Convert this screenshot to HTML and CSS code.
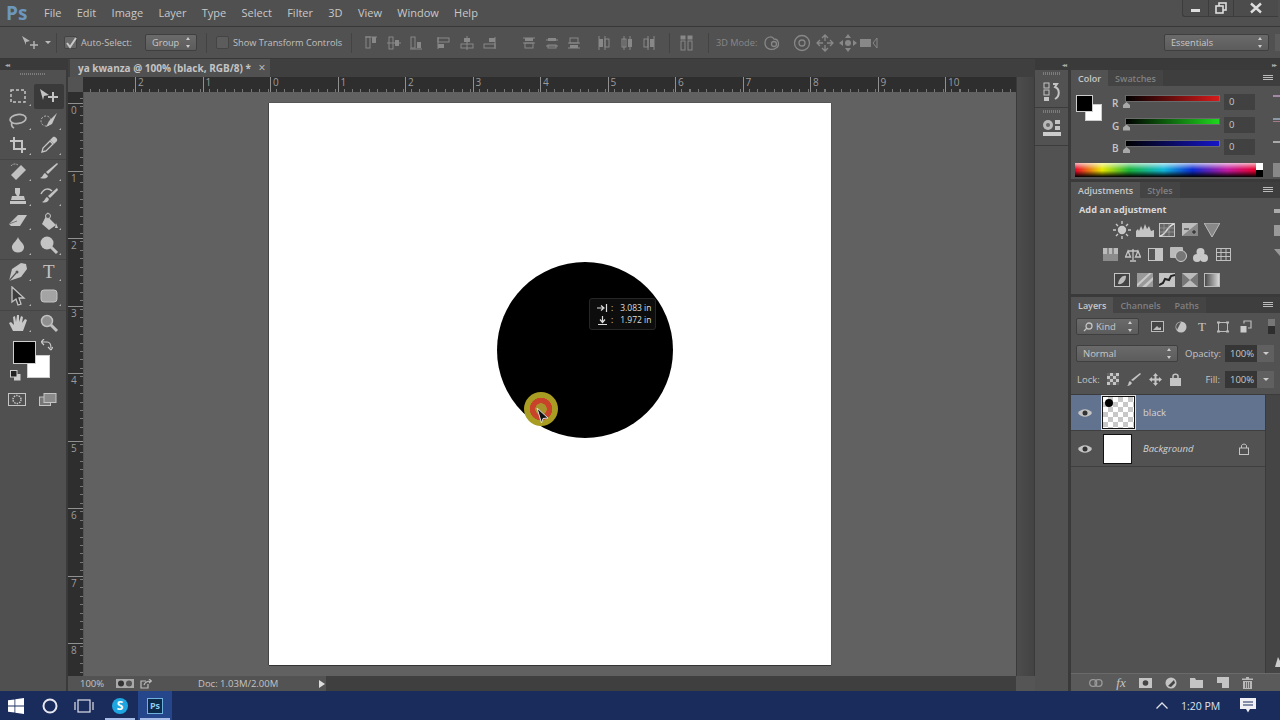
FILE: index.html
```html
<!DOCTYPE html>
<html lang="en">
<head>
  <meta charset="UTF-8" />
  <title>ya kwanza @ 100% (black, RGB/8) *</title>
  <link rel="stylesheet" href="styles.css">
</head>
<body>
<div class="app">

  <!-- Menu bar -->
  <div class="menubar">
    <div class="ps-logo">Ps</div>
    <nav class="menu">
      <span>File</span><span>Edit</span><span>Image</span><span>Layer</span><span>Type</span><span>Select</span><span>Filter</span><span>3D</span><span>View</span><span>Window</span><span>Help</span>
    </nav>
    <div class="win-buttons">
      <div class="win-btn min"><svg width="10" height="10" viewBox="0 0 10 10"><rect x="0" y="6" width="9" height="3" fill="#ddd"/></svg></div>
      <div class="win-btn max"><svg width="12" height="12" viewBox="0 0 12 12" fill="none" stroke="#ddd" stroke-width="1.6"><rect x="4" y="1" width="7" height="7"/><rect x="1" y="4" width="7" height="7" fill="#4f4f4f"/></svg></div>
      <div class="win-btn close"><svg width="12" height="12" viewBox="0 0 12 12" stroke="#ddd" stroke-width="2.4"><path d="M1 1.5 L11 10.5 M11 1.5 L1 10.5"/></svg></div>
    </div>
  </div>

  <!-- Options bar -->
  <div class="options">
    <svg class="opt-move" width="18" height="14" viewBox="0 0 18 14" fill="#b5b5b5"><path d="M0 0 L8 5 L4 6 L4 9 Z"/><path d="M12 5 V13 M8 9 H16" stroke="#b5b5b5" stroke-width="1.4"/></svg>
    <span class="caret"></span>
    <span class="opt-sep sep-a"></span>
    <span class="checkbox"><svg width="12" height="12" viewBox="0 0 12 12" fill="none" stroke="#c8c8c8" stroke-width="2"><path d="M2 6 L5 10 L11 1"/></svg></span>
    <span class="opt-label auto">Auto-Select:</span>
    <span class="select group-select">Group<i class="updown"></i></span>
    <span class="opt-sep sep-b"></span>
    <span class="checkbox empty"></span>
    <span class="opt-label transform">Show Transform Controls</span>
    <span class="opt-sep sep-c"></span>
    <div class="align-icons">
      <div class="align-set set-1">
        <svg width="14" height="14" viewBox="0 0 14 14"><path d="M1 1H13" stroke="#888"/><rect x="2" y="1" width="4" height="11" fill="none" stroke="#888"/><rect x="8" y="1" width="4" height="6" fill="#888"/></svg>
        <svg width="14" height="14" viewBox="0 0 14 14"><path d="M0 7H14" stroke="#888"/><rect x="2" y="1" width="4" height="12" fill="none" stroke="#888"/><rect x="8" y="4" width="4" height="6" fill="#888"/></svg>
        <svg width="14" height="14" viewBox="0 0 14 14"><path d="M1 13H13" stroke="#888"/><rect x="2" y="1" width="4" height="11" fill="none" stroke="#888"/><rect x="8" y="6" width="4" height="6" fill="#888"/></svg>
      </div>
      <div class="align-set set-2">
        <svg width="14" height="14" viewBox="0 0 14 14"><path d="M1 1V13" stroke="#888"/><rect x="1" y="2" width="11" height="4" fill="none" stroke="#888"/><rect x="1" y="8" width="6" height="4" fill="#888"/></svg>
        <svg width="14" height="14" viewBox="0 0 14 14"><path d="M7 0V14" stroke="#888"/><rect x="1" y="8" width="12" height="4" fill="none" stroke="#888"/><rect x="4" y="2" width="6" height="4" fill="#888"/></svg>
        <svg width="14" height="14" viewBox="0 0 14 14"><path d="M13 1V13" stroke="#888"/><rect x="2" y="8" width="11" height="4" fill="none" stroke="#888"/><rect x="7" y="2" width="6" height="4" fill="#888"/></svg>
      </div>
      <div class="align-set set-3">
        <svg width="14" height="14" viewBox="0 0 14 14"><path d="M1 2H13M1 7H13" stroke="#888"/><rect x="3" y="2" width="8" height="3" fill="#888"/><rect x="3" y="7" width="8" height="5" fill="none" stroke="#888"/></svg>
        <svg width="14" height="14" viewBox="0 0 14 14"><path d="M1 4H13M1 10H13" stroke="#888"/><rect x="3" y="2" width="8" height="3" fill="#888"/><rect x="3" y="9" width="8" height="3" fill="none" stroke="#888"/></svg>
        <svg width="14" height="14" viewBox="0 0 14 14"><path d="M1 7H13M1 12H13" stroke="#888"/><rect x="3" y="2" width="8" height="5" fill="none" stroke="#888"/><rect x="3" y="9" width="8" height="3" fill="#888"/></svg>
      </div>
      <div class="align-set">
        <svg width="14" height="14" viewBox="0 0 14 14"><path d="M2 0V14M8 0V14" stroke="#888"/><rect x="2" y="3" width="4" height="8" fill="#888"/><rect x="8" y="3" width="4" height="8" fill="none" stroke="#888"/></svg>
        <svg width="14" height="14" viewBox="0 0 14 14"><path d="M4 0V14M10 0V14" stroke="#888"/><rect x="2" y="3" width="4" height="8" fill="none" stroke="#888"/><rect x="8" y="3" width="4" height="8" fill="#888"/></svg>
        <svg width="14" height="14" viewBox="0 0 14 14"><path d="M6 0V14M12 0V14" stroke="#888"/><rect x="2" y="3" width="4" height="8" fill="none" stroke="#888"/><rect x="8" y="3" width="4" height="8" fill="#888"/></svg>
      </div>
      <span class="opt-sep sep-d"></span>
      <svg width="16" height="16" viewBox="0 0 16 16" fill="none" stroke="#888"><rect x="2" y="6" width="4" height="9"/><rect x="9" y="6" width="4" height="9"/><rect x="2" y="1" width="4" height="3" fill="#888"/><rect x="9" y="1" width="4" height="3" fill="#888"/></svg>
      <span class="opt-sep sep-e"></span>
    </div>
    <span class="opt-label mode">3D Mode:</span>
    <div class="mode-icons">
      <svg width="20" height="18" viewBox="0 0 20 18" fill="none" stroke="#888" stroke-width="1.3"><path d="M3 9 C3 3 10 1 12 5 C17 5 18 12 14 14 C10 17 3 15 3 9Z"/><circle cx="12" cy="10" r="2.5"/></svg>
      <svg width="18" height="20" viewBox="0 0 18 20" fill="none" stroke="#888" stroke-width="1.3"><circle cx="9" cy="10" r="7.5"/><circle cx="9" cy="10" r="3"/></svg>
      <svg width="18" height="18" viewBox="0 0 18 18" fill="none" stroke="#888" stroke-width="1.3"><path d="M9 1V7M9 11V17M1 9H7M11 9H17M6 4L9 1L12 4M6 14L9 17L12 14M4 6L1 9L4 12M14 6L17 9L14 12"/></svg>
      <svg width="18" height="18" viewBox="0 0 18 18" fill="#888"><path d="M9 0L12 4H6ZM9 18L12 14H6ZM0 9L4 6V12ZM18 9L14 6V12Z"/><circle cx="9" cy="9" r="3"/></svg>
      <svg width="18" height="12" viewBox="0 0 18 12" fill="#888"><rect x="0" y="2" width="11" height="8"/><path d="M13 6L17 1V11Z" fill="none" stroke="#888"/></svg>
    </div>
    <span class="select essentials">Essentials<i class="updown"></i></span>
    <span class="select-stub"></span>
  </div>

  <div class="main">

    <!-- Tools -->
    <aside class="toolbar">
      <div class="collapse-bar"><span class="chevrons">◂◂</span></div>
      <div class="grip"></div>
      <div class="tool-group">
        <div class="tool more"><svg width="18" height="16" viewBox="0 0 18 16" fill="none" stroke="#c4c4c4" stroke-width="1.5" stroke-dasharray="3 2"><rect x="2" y="2" width="14" height="12"/></svg></div>
        <div class="tool active"><svg width="20" height="16" viewBox="0 0 20 16" fill="#c4c4c4"><path d="M1 1 L10 7 L5 8 L4 12 Z"/><path d="M14 4 V14 M9 9 H19" stroke="#c4c4c4" stroke-width="2"/></svg></div>
        <div class="tool more"><svg width="18" height="16" viewBox="0 0 18 16" fill="none" stroke="#b8b8b8" stroke-width="1.7"><ellipse cx="9" cy="6" rx="8" ry="4.5" transform="rotate(-8 9 6)"/><path d="M3 9 C2 12 3 14 5 15"/></svg></div>
        <div class="tool more"><svg width="18" height="18" viewBox="0 0 18 18"><circle cx="6" cy="9" r="5" fill="none" stroke="#b8b8b8" stroke-dasharray="2 1.5"/><path d="M17 1 L9 9 L6 15 L12 12 Z" fill="#c4c4c4"/></svg></div>
        <div class="tool more"><svg width="18" height="18" viewBox="0 0 18 18" fill="none" stroke="#c4c4c4" stroke-width="2"><path d="M5 1V13H17M1 5H13V17"/></svg></div>
        <div class="tool more"><svg width="18" height="18" viewBox="0 0 18 18"><path d="M2 16 L3 12 L10 5 L13 8 L6 15 Z" fill="none" stroke="#c4c4c4" stroke-width="1.3"/><path d="M10 4 L13 1 C15 0 18 3 17 5 L14 8 Z" fill="#c4c4c4"/></svg></div>
      </div>
      <div class="tool-group">
        <div class="tool more"><svg width="20" height="20" viewBox="0 0 20 20"><path d="M3 13 L13 3 L18 8 L8 18 Z" fill="#c0c0c0"/><path d="M3 4 C5 1 9 2 10 3" fill="none" stroke="#b0b0b0" stroke-dasharray="2 1"/></svg></div>
        <div class="tool more"><svg width="20" height="20" viewBox="0 0 20 20" fill="#c4c4c4"><path d="M18 1 L19 2 L9 12 L7 10 Z"/><path d="M6 11 L9 14 C8 17 4 17 1 16 C4 15 4 12 6 11Z"/></svg></div>
        <div class="tool more"><svg width="20" height="18" viewBox="0 0 20 18" fill="#c4c4c4"><path d="M7 1 H12 V6 L11 9 H16 L17 13 H3 L4 9 H9 L7 6 Z"/><rect x="2" y="14" width="16" height="3"/></svg></div>
        <div class="tool more"><svg width="20" height="18" viewBox="0 0 20 18" fill="#c4c4c4"><path d="M18 1 L9 9 L11 11 L19 3Z"/><path d="M8 10 L10 12 C9 16 5 16 3 15 C6 14 6 11 8 10Z"/><path d="M2 7 C5 1 10 1 13 4" fill="none" stroke="#c4c4c4" stroke-width="1.5"/></svg></div>
        <div class="tool more"><svg width="20" height="16" viewBox="0 0 20 16"><path d="M1 11 L10 2 H19 L12 13 H3 Z" fill="#c4c4c4"/><path d="M1 11 L9 8" stroke="#777"/></svg></div>
        <div class="tool more"><svg width="20" height="20" viewBox="0 0 20 20"><path d="M9 1 L11 8 L17 14 L10 19 L3 13 Z" fill="#c4c4c4"/><circle cx="9" cy="5" r="2.5" fill="#555" stroke="#c4c4c4"/><path d="M17 12 L19 17 L16 17Z" fill="#c4c4c4"/></svg></div>
        <div class="tool more"><svg width="16" height="18" viewBox="0 0 16 18" fill="#c4c4c4"><path d="M8 1 C9 5 15 8 14 12 C13 18 3 18 2 12 C1 8 7 5 8 1Z"/></svg></div>
        <div class="tool more"><svg width="20" height="20" viewBox="0 0 20 20"><circle cx="8" cy="8" r="6.5" fill="#c4c4c4"/><path d="M12 12 L18 18" stroke="#c4c4c4" stroke-width="3"/></svg></div>
      </div>
      <div class="tool-group">
        <div class="tool more"><svg width="20" height="20" viewBox="0 0 20 20"><path d="M18 2 L13 1 L4 7 L1 19 L13 15 L19 7 Z" fill="#c4c4c4"/><path d="M1 19 L8 11" stroke="#555" stroke-width="1.2"/><circle cx="9" cy="10" r="1.5" fill="#555"/></svg></div>
        <div class="tool more type">T</div>
        <div class="tool more"><svg width="16" height="20" viewBox="0 0 16 20" fill="#3d3d3d" stroke="#c4c4c4" stroke-width="1.3"><path d="M2 1 L14 12 L9 12 L11 18 L8 19 L6 13 L2 16 Z"/></svg></div>
        <div class="tool more"><svg width="18" height="14" viewBox="0 0 18 14"><rect x="1" y="1" width="16" height="12" rx="3" fill="#a4a4a4" stroke="#c4c4c4"/></svg></div>
      </div>
      <div class="tool-group last">
        <div class="tool more"><svg width="20" height="20" viewBox="0 0 20 20" fill="#c8c8c8"><path d="M5 18 L1 10 L3 9 L6 12 L5 4 L7 3 L8 9 L9 2 L11 2 L11 9 L13 3 L15 4 L14 10 L17 6 L19 7 L15 18 Z"/></svg></div>
        <div class="tool"><svg width="20" height="20" viewBox="0 0 20 20"><circle cx="8" cy="8" r="5.5" fill="#8f8f8f" stroke="#c0c0c0" stroke-width="1.5"/><path d="M12 12 L18 18" stroke="#c0c0c0" stroke-width="3"/></svg></div>
      </div>
      <div class="colors">
        <div class="chip chip-bg"></div>
        <div class="chip chip-fg"></div>
        <svg class="chip-swap" width="12" height="12" viewBox="0 0 12 12" fill="none" stroke="#ccc" stroke-width="1.2"><path d="M1 3H6C9 3 10 5 10 9M0 3L3 0M0 3L3 6M10 11L7 8M10 11L12 8"/></svg>
        <svg class="chip-reset" width="11" height="11" viewBox="0 0 11 11"><rect x="4" y="4" width="6.5" height="6.5" fill="#ccc"/><rect x="0.5" y="0.5" width="6.5" height="6.5" fill="#222" stroke="#ccc"/></svg>
      </div>
      <div class="mask-row">
        <svg width="18" height="13" viewBox="0 0 18 13"><rect x="0.5" y="0.5" width="17" height="12" fill="none" stroke="#c4c4c4"/><circle cx="9" cy="6.5" r="4" fill="none" stroke="#c4c4c4" stroke-width="1.5" stroke-dasharray="1.5 1"/></svg>
        <svg width="18" height="13" viewBox="0 0 18 13"><rect x="0.5" y="4" width="11" height="8.5" fill="#777" stroke="#c4c4c4"/><rect x="5" y="0.5" width="12" height="9" fill="#8a8a8a" stroke="#c4c4c4"/></svg>
      </div>
    </aside>

    <!-- Document -->
    <section class="document">
      <div class="tabs">
        <div class="doc-tab">ya kwanza @ 100% (black, RGB/8) * <span class="tab-x">×</span></div>
      </div>
      <div class="doc-body">
        <div class="doc-view">
          <div class="ruler-corner"></div>
          <div class="ruler ruler-h">
            <span class="start">&nbsp;</span><span>2</span><span>1</span><span>0</span><span>1</span><span>2</span><span>3</span><span>4</span><span>5</span><span>6</span><span>7</span><span>8</span><span>9</span><span>10</span>
          </div>
          <div class="ruler ruler-v">
            <span class="start"></span><span>0</span><span>1</span><span>2</span><span>3</span><span>4</span><span>5</span><span>6</span><span>7</span><span>8</span>
          </div>
          <div class="pasteboard">
            <div class="page">
              <div class="shape"></div>
              <div class="readout">
                <div class="readout-row"><svg width="11" height="8" viewBox="0 0 11 8" fill="none" stroke="#ddd" stroke-width="1.2"><path d="M0 4H6M4 1.500L7 4L4 6.500M9.500 0V8"/></svg><span>:</span><span>3.083 in</span></div>
                <div class="readout-row"><svg width="11" height="9" viewBox="0 0 11 9" fill="none" stroke="#ddd" stroke-width="1.2"><path d="M5.500 0V6M3 3.500L5.500 6.500L8 3.500M1 8.500H10"/></svg><span>:</span><span>1.972 in</span></div>
              </div>
              <div class="click-mark"></div>
              <svg class="cursor" width="14" height="17" viewBox="0 0 14 17"><path d="M1 1 L12 11 L7 11.5 L5.5 16 Z" fill="#111" stroke="#ddd"/></svg>
            </div>
          </div>
        </div>
        <div class="doc-scroll"></div>
      </div>
      <div class="statusbar">
        <div class="status-info">
          <span class="zoom-val">100%</span>
          <svg class="status-ico" width="18" height="9" viewBox="0 0 18 9"><rect width="18" height="9" fill="#aaa"/><circle cx="5" cy="4.5" r="3" fill="#333"/><circle cx="13" cy="4.5" r="3" fill="#555"/></svg>
          <svg width="12" height="10" viewBox="0 0 12 10" fill="none" stroke="#bbb" stroke-width="1.2"><path d="M8 5V9H1V2H6"/><path d="M4 6 C5 3 7 2 11 2M9 0L11.5 2L9 4"/></svg>
          <span class="doc-size">Doc: 1.03M/2.00M</span>
          <span class="play"></span>
        </div>
        <div class="status-track"></div>
        <div class="status-corner"></div>
      </div>
    </section>

    <!-- Collapsed panels -->
    <aside class="dock">
      <div class="collapse-bar right"><span class="chevrons">◂◂</span></div>
      <div class="dock-item">
        <div class="grip"></div>
        <svg width="20" height="20" viewBox="0 0 20 20"><g fill="none" stroke="#c4c4c4"><rect x="2" y="1" width="5" height="5"/><rect x="2" y="8" width="5" height="5"/></g><rect x="2" y="15" width="5" height="4" fill="#c4c4c4"/><path d="M11 2H15L13 5C18 7 18 14 13 17" fill="none" stroke="#c4c4c4" stroke-width="2"/></svg>
      </div>
      <div class="dock-item">
        <div class="grip"></div>
        <svg width="20" height="20" viewBox="0 0 20 20"><circle cx="6" cy="7" r="5" fill="#b8b8b8"/><circle cx="6" cy="7" r="2" fill="#666"/><rect x="13" y="2" width="5" height="4" fill="#c4c4c4"/><rect x="13" y="8" width="5" height="4" fill="#c4c4c4"/><rect x="1" y="14" width="18" height="4" fill="#ccc"/></svg>
      </div>
    </aside>

    <!-- Panels -->
    <aside class="panels">
      <div class="collapse-bar end"><span class="chevrons">▸▸</span></div>

      <div class="panel color-panel">
        <div class="panel-tabs">
          <span class="ptab on">Color</span><span class="ptab">Swatches</span>
          <span class="panel-menu"></span>
        </div>
        <div class="color-body">
          <div class="color-chips">
            <div class="chip-b"></div>
            <div class="chip-f"></div>
          </div>
          <div class="sliders">
            <div class="slider-row"><span class="slider-name">R</span><div class="track red"><i class="thumb"></i></div><span class="num">0</span></div>
            <div class="slider-row"><span class="slider-name">G</span><div class="track green"><i class="thumb"></i></div><span class="num">0</span></div>
            <div class="slider-row"><span class="slider-name">B</span><div class="track blue"><i class="thumb"></i></div><span class="num">0</span></div>
          </div>
        </div>
        <div class="spectrum-row">
          <div class="spectrum"></div>
          <div class="spectrum-ends"><i></i><i></i></div>
        </div>
      </div>

      <div class="panel adjust-panel">
        <div class="panel-tabs">
          <span class="ptab on">Adjustments</span><span class="ptab">Styles</span>
          <span class="panel-menu"></span>
        </div>
        <div class="adjust-title">Add an adjustment</div>
        <div class="adj-row">
          <svg width="18" height="18" viewBox="0 0 18 18" stroke="#c8c8c8" stroke-width="1.4"><circle cx="9" cy="9" r="3.5" fill="#c8c8c8"/><path d="M9 0V3M9 15V18M0 9H3M15 9H18M3 3L5 5M13 13L15 15M15 3L13 5M5 13L3 15"/></svg>
          <svg width="18" height="14" viewBox="0 0 18 14" fill="#c4c4c4"><path d="M0 14 V8 L2 6 L3 8 L5 3 L7 7 L9 1 L11 6 L13 3 L15 8 L18 7 V14Z"/></svg>
          <svg width="16" height="14" viewBox="0 0 16 14"><rect x="0.5" y="0.5" width="15" height="13" fill="#666" stroke="#c4c4c4"/><path d="M1 13 C7 12 8 3 15 1" fill="none" stroke="#ddd" stroke-width="1.5"/><path d="M5 1V13M10 1V13M1 5H15M1 9H15" stroke="#aaa" stroke-width="0.6"/></svg>
          <svg width="16" height="13" viewBox="0 0 16 13"><rect width="16" height="13" fill="#bdbdbd"/><path d="M0 13 L16 0 V13Z" fill="#888"/><path d="M2 6H7M10 9H14M12 7V11" stroke="#222"/></svg>
          <svg width="16" height="14" viewBox="0 0 16 14"><path d="M0 0 H16 L8 14 Z" fill="#888" stroke="#bbb"/></svg>
        </div>
        <div class="adj-row six">
          <svg width="15" height="13" viewBox="0 0 15 13"><rect width="15" height="6" fill="#bbb"/><rect y="6" width="15" height="7" fill="#8c8c8c"/><path d="M5 0V6M10 0V6" stroke="#555"/></svg>
          <svg width="16" height="14" viewBox="0 0 16 14" fill="none" stroke="#c4c4c4" stroke-width="1.3"><path d="M8 1V12M3 3H13M3 3L0.5 9H5.5ZM13 3L10.5 9H15.5ZM5 13H11"/></svg>
          <svg width="15" height="13" viewBox="0 0 15 13"><rect x="0.5" y="0.5" width="14" height="12" fill="#555" stroke="#c4c4c4"/><rect x="7" y="0" width="8" height="13" fill="#c4c4c4"/></svg>
          <svg width="17" height="15" viewBox="0 0 17 15"><rect x="0" y="0" width="13" height="11" rx="1" fill="#bbb"/><circle cx="11" cy="9" r="5.5" fill="#777" stroke="#ccc"/></svg>
          <svg width="15" height="14" viewBox="0 0 15 14" fill="#c8c8c8"><circle cx="7.5" cy="4" r="4"/><circle cx="4" cy="10" r="4"/><circle cx="11" cy="10" r="4"/></svg>
          <svg width="15" height="13" viewBox="0 0 15 13" fill="none" stroke="#c0c0c0"><rect x="0.5" y="0.5" width="14" height="12"/><path d="M5 0V13M10 0V13M0 4.5H15M0 8.5H15"/></svg>
        </div>
        <div class="adj-row">
          <svg width="16" height="14" viewBox="0 0 16 14"><rect x="0.5" y="0.5" width="15" height="13" fill="#444" stroke="#c4c4c4"/><path d="M4 11 C5 5 9 2 12 3 C12 8 8 12 4 11Z" fill="#bbb"/></svg>
          <svg width="16" height="14" viewBox="0 0 16 14"><rect width="16" height="14" fill="#999"/><path d="M0 11 L12 0 H15 L0 14Z M5 14 L16 4 V7 L9 14Z" fill="#c8c8c8"/></svg>
          <svg width="16" height="14" viewBox="0 0 16 14"><rect width="16" height="14" fill="#c4c4c4"/><path d="M0 12 L4 10 L6 6 L10 7 L12 3 L16 2" fill="none" stroke="#222" stroke-width="2"/></svg>
          <svg width="16" height="14" viewBox="0 0 16 14"><rect width="16" height="14" fill="#bbb"/><path d="M0 0 L8 7 L0 14Z M16 0 L8 7 L16 14Z" fill="#777"/></svg>
          <svg width="16" height="14" viewBox="0 0 16 14"><defs><linearGradient id="grad"><stop offset="0" stop-color="#444"/><stop offset="1" stop-color="#ddd"/></linearGradient></defs><rect x="0.5" y="0.5" width="15" height="13" fill="url(#grad)" stroke="#bbb"/></svg>
        </div>
      </div>

      <div class="panel layers-panel">
        <div class="panel-tabs">
          <span class="ptab on">Layers</span><span class="ptab">Channels</span><span class="ptab">Paths</span>
          <span class="panel-menu"></span>
        </div>
        <div class="layer-filter">
          <span class="select kind"><svg width="10" height="10" viewBox="0 0 10 10" fill="none" stroke="#c4c4c4" stroke-width="1.3"><circle cx="6" cy="4" r="3"/><path d="M4 6L1 9"/></svg>Kind<i class="updown"></i></span>
          <div class="filter-icons">
            <svg width="13" height="11" viewBox="0 0 13 11"><rect x="0.5" y="0.5" width="12" height="10" fill="#444" stroke="#bbb"/><path d="M2 9L6 5L8 7L10 6V9Z" fill="#bbb"/></svg>
            <svg width="12" height="12" viewBox="0 0 12 12"><circle cx="6" cy="6" r="5.5" fill="#c4c4c4"/><path d="M6 1 A5 5 0 0 0 2 9 Z" fill="#555"/></svg>
            <span class="filter-t">T</span>
            <svg width="12" height="12" viewBox="0 0 12 12" fill="none" stroke="#bbb"><rect x="1.5" y="1.5" width="9" height="9"/><path d="M0 1.5H3M9 1.5H12M0 10.5H3M9 10.5H12" stroke-width="2"/></svg>
            <svg width="12" height="13" viewBox="0 0 12 13"><rect x="0.5" y="6" width="6" height="6.5" fill="#ccc"/><path d="M4 3.5V1H11V8H8" fill="none" stroke="#bbb" stroke-width="1.2"/></svg>
          </div>
          <span class="filter-toggle"></span>
        </div>
        <div class="layer-blend">
          <span class="select normal">Normal<i class="updown"></i></span>
          <span class="field-label">Opacity:</span>
          <span class="pct">100%</span><span class="pct-arrow"></span>
        </div>
        <div class="layer-lock">
          <span class="field-label">Lock:</span>
          <div class="lock-icons">
            <i class="lock-checker"></i>
            <svg width="14" height="13" viewBox="0 0 14 13" fill="#c4c4c4"><path d="M13 0L14 1L6 8L4 7Z"/><path d="M3 8L5 10C4 12 2 13 0 13C2 12 1 9 3 8Z"/></svg>
            <svg width="13" height="13" viewBox="0 0 13 13" fill="#c4c4c4"><path d="M6.5 0L9 3H4ZM6.5 13L9 10H4ZM0 6.5L3 4V9ZM13 6.5L10 4V9Z"/><rect x="5.5" y="3" width="2" height="7"/><rect x="3" y="5.5" width="7" height="2"/></svg>
            <svg width="11" height="13" viewBox="0 0 11 13"><rect y="5" width="11" height="8" fill="#c4c4c4"/><path d="M3 5V3C3 0.5 8 0.5 8 3V5" fill="none" stroke="#c4c4c4" stroke-width="1.5"/></svg>
          </div>
          <span class="field-label fill">Fill:</span>
          <span class="pct">100%</span><span class="pct-arrow"></span>
        </div>
        <div class="layers-wrap">
          <div class="layer-list">
            <div class="layer selected">
              <svg class="eye" width="14" height="10" viewBox="0 0 14 10"><path d="M0 5C3 0 11 0 14 5C11 10 3 10 0 5Z" fill="#c4c4c4"/><circle cx="7" cy="5" r="2.5" fill="#333"/></svg>
              <span class="thumb-box sel"><span class="thumb-dot"></span></span>
              <span class="layer-name">black</span>
            </div>
            <div class="layer">
              <svg class="eye" width="14" height="10" viewBox="0 0 14 10"><path d="M0 5C3 0 11 0 14 5C11 10 3 10 0 5Z" fill="#c4c4c4"/><circle cx="7" cy="5" r="2.5" fill="#333"/></svg>
              <span class="thumb-box white"></span>
              <span class="layer-name ital">Background</span>
              <svg class="layer-lock-ico" width="10" height="12" viewBox="0 0 10 12" fill="none" stroke="#c4c4c4"><rect x="0.5" y="5" width="9" height="6.5"/><path d="M2.5 5V3C2.5 0.5 7.5 0.5 7.5 3V5"/></svg>
            </div>
          </div>
          <div class="layers-scroll"></div>
        </div>
        <div class="layer-actions">
          <svg width="14" height="8" viewBox="0 0 14 8" fill="none" stroke="#999" stroke-width="1.3"><rect x="0.7" y="0.7" width="7" height="6.6" rx="3"/><rect x="6" y="0.7" width="7" height="6.6" rx="3"/></svg>
          <span class="fx">fx</span>
          <svg width="13" height="10" viewBox="0 0 13 10"><rect width="13" height="10" fill="#c4c4c4"/><circle cx="6.5" cy="5" r="2.8" fill="#444"/></svg>
          <svg width="12" height="12" viewBox="0 0 12 12"><circle cx="6" cy="6" r="5.5" fill="#c4c4c4"/><path d="M3 9L9 3L10 6L6 10Z" fill="#444"/></svg>
          <svg width="13" height="10" viewBox="0 0 13 10" fill="#c4c4c4"><path d="M0 0H5L6 2H13V10H0Z"/></svg>
          <svg width="12" height="11" viewBox="0 0 12 11" fill="#c4c4c4"><path d="M0 0H12V11H5V6H0Z"/></svg>
          <svg width="11" height="12" viewBox="0 0 11 12" fill="#b8b8b8"><path d="M0 1.5H11V3H0ZM4 0H7V1.5H4ZM1 4H10V12H1Z"/><path d="M3.5 5V11M5.5 5V11M7.5 5V11" stroke="#555" stroke-width="0.8"/></svg>
        </div>
      </div>

      <!-- next panel column, cut off by the window edge -->
      <svg class="edge-marks" width="8" height="632" viewBox="0 0 8 632">
        <rect x="1" y="36" width="7" height="2" fill="#a58aa8"/>
        <rect x="1" y="59" width="7" height="2" fill="#8a9aa8"/>
        <rect x="1" y="62" width="7" height="1" fill="#a87a88"/>
        <rect x="1" y="82" width="7" height="2" fill="#aaa"/>
        <rect x="1" y="104" width="7" height="14" fill="#888"/>
        <rect x="2" y="150" width="6" height="4" fill="#aaa"/>
        <rect x="2" y="166" width="6" height="11" fill="#999"/>
        <path d="M2 190H8V197Z" fill="#999"/>
        <path d="M6 598L8 602V608H3Z" fill="#ccc"/>
      </svg>
    </aside>
  </div>

  <!-- Windows taskbar -->
  <footer class="taskbar">
    <div class="task-left">
      <span class="task-item"><svg width="16" height="16" viewBox="0 0 16 16" fill="#fff"><path d="M0 2.3L6.5 1.4V7.6H0ZM7.3 1.3L16 0V7.6H7.300ZM0 8.4H6.5V14.6L0 13.7ZM7.3 8.4H16V16L7.3 14.7Z"/></svg></span>
      <span class="task-item"><svg width="16" height="16" viewBox="0 0 16 16" fill="none" stroke="#e8e8f0" stroke-width="2"><circle cx="8" cy="8" r="6.5"/></svg></span>
      <span class="task-item"><svg width="20" height="14" viewBox="0 0 20 14" fill="none" stroke="#e0e0e8" stroke-width="1.2"><rect x="4" y="1" width="12" height="12"/><path d="M1 3V11M19 3V11"/></svg></span>
      <span class="task-item open"><span class="skype">S</span></span>
      <span class="task-item open current"><span class="ps-task">Ps</span></span>
    </div>
    <div class="task-right">
      <svg width="12" height="7" viewBox="0 0 12 7" fill="none" stroke="#e0e0e8" stroke-width="1.3"><path d="M0.5 6.5L6 1L11.5 6.5"/></svg>
      <span class="clock">1:20 PM</span>
      <svg class="notify" width="16" height="15" viewBox="0 0 16 15"><path d="M0 0H16V11H10L8 14.5L6 11H0Z" fill="#f0f0f4"/><path d="M3 4H13M3 7H13" stroke="#1a2c5c"/></svg>
    </div>
  </footer>

</div>
</body>
</html>
```

FILE: styles.css
```css
:root {
  --ui: #515151;
  --ui-dark: #3f3f3f;
  --ui-line: #383838;
  --text: #c6c6c6;
  --text-dim: #8c8c8c;
  --ruler: #2e2e2e;
  --board: #616161;
  --task: #1a2c5c;
}

* {
  box-sizing: border-box;
}

body {
  margin: 0;
  background: var(--ui);
  font-family: "Open Sans", "Noto Sans", sans-serif;
  font-size: 11px;
  color: var(--text);
  overflow: hidden;
}

svg {
  display: block;
  flex: none;
}

.app {
  width: 1280px;
  height: 720px;
  display: flex;
  flex-direction: column;
  overflow: hidden;
}

/* menu bar */
.menubar {
  height: 27px;
  display: flex;
  align-items: center;
  background: #505050;
  border-bottom: 1px solid var(--ui-line);
  flex: none;
}

.ps-logo {
  width: 34px;
  padding-left: 6px;
  font-size: 19px;
  font-weight: 700;
  line-height: 25px;
  color: #6d97bd;
}

.menu {
  display: flex;
  gap: 15.3px;
  padding: 0 0 2px 10px;
  font-size: 11px;
  color: #c8c8c8;
}

.win-buttons {
  margin-left: auto;
  align-self: flex-start;
  display: flex;
  height: 17px;
  margin-right: 2px;
  background: #4c4c4c;
  border: 1px solid #3c3c3c;
  border-top: 0;
  border-right: 0;
  border-radius: 0 0 0 3px;
}

.win-btn {
  display: flex;
  align-items: center;
  justify-content: center;
  height: 100%;
  border-left: 1px solid #3c3c3c;
}

.win-btn.min { width: 25px; border-left: 0; }
.win-btn.max { width: 25px; }
.win-btn.close { width: 45px; }

/* options bar */
.options {
  height: 32px;
  display: flex;
  align-items: center;
  padding-left: 22px;
  background: #515151;
  border-bottom: 1px solid var(--ui-line);
  flex: none;
  font-size: 9.2px;
}

.options > * {
  flex: none;
}

.caret {
  width: 0;
  height: 0;
  margin-left: 5px;
  border: 3px solid transparent;
  border-top: 3px solid #bbb;
  border-bottom: 0;
}

.opt-sep {
  width: 1px;
  height: 20px;
  background: #434343;
  flex: none;
}

.sep-a { margin: 0 7px 0 5px; }
.sep-b { margin: 0 9px; }
.sep-c { margin: 0 12px 0 13px; }
.sep-d { margin: 0 9px 0 13px; }
.sep-e { margin: 0 7px 0 13px; }

.checkbox {
  width: 13px;
  height: 13px;
  display: flex;
  align-items: center;
  justify-content: center;
  background: #686868;
  border: 1px solid #444;
  border-radius: 2px;
}

.checkbox.empty { background: #5c5c5c; }

.opt-label {
  white-space: nowrap;
  color: #c0c0c0;
}

.opt-label.auto { margin-left: 4px; width: 50px; }
.opt-label.transform { margin-left: 4px; width: 105px; }
.opt-label.mode { width: 46px; color: #888; }

.select {
  display: flex;
  align-items: center;
  height: 17px;
  padding: 0 5px 0 6px;
  background: linear-gradient(#6a6a6a, #5c5c5c);
  border: 1px solid #3f3f3f;
  border-radius: 2px;
  color: #c8c8c8;
  flex: none;
}

.updown {
  position: relative;
  width: 5px;
  height: 9px;
  margin-left: auto;
}

.updown::before,
.updown::after {
  content: "";
  position: absolute;
  left: 0;
  border: 2.5px solid transparent;
}

.updown::before { top: -1px; border-bottom: 3px solid #ccc; border-top: 0; }
.updown::after { bottom: -1px; border-top: 3px solid #ccc; border-bottom: 0; }

.group-select { width: 52px; margin-left: 14px; }

.align-icons {
  display: flex;
  align-items: center;
}

.align-set {
  display: flex;
  gap: 8.5px;
}

.set-1 { margin-right: 14px; }
.set-2 { margin-right: 26px; }
.set-3 { margin-right: 16px; }

.mode-icons {
  display: flex;
  align-items: center;
  gap: 5px;
  width: 116px;
}

.mode-icons svg:first-child { margin-right: 6px; }
.mode-icons svg:last-child { margin-left: -2px; }

.essentials { width: 105px; margin-left: 286px; }

.select-stub {
  width: 5px;
  height: 17px;
  margin-left: 6px;
  background: #5c5c5c;
}

/* main row */
.main {
  flex: 1;
  display: flex;
  min-height: 0;
}

.collapse-bar {
  height: 11px;
  display: flex;
  align-items: center;
  background: #3a3a3a;
  font-size: 6px;
  color: #aaa;
  letter-spacing: -1px;
  flex: none;
}

.chevrons { line-height: 1; font-family: "DejaVu Sans", sans-serif; }

/* tools */
.toolbar {
  width: 68px;
  display: flex;
  flex-direction: column;
  flex: none;
  background: #505050;
  border-right: 2px solid #3a3a3a;
}

.toolbar .collapse-bar { padding-left: 5px; }

.grip {
  height: 14px;
  flex: none;
  background: repeating-linear-gradient(90deg, #7c7c7c 0 1px, transparent 1px 2px) content-box;
  padding: 3px 20px 9px;
}

.tool-group {
  display: grid;
  grid-template-columns: 30.5px 30.5px;
  grid-auto-rows: 24.5px;
  padding-left: 3px;
  border-bottom: 1px solid #454545;
  padding-bottom: 1px;
}

.tool-group.last { border-bottom: 0; }

.tool {
  position: relative;
  display: flex;
  align-items: center;
  justify-content: center;
}

.tool.active {
  background: #3a3a3a;
  border-radius: 2px;
}

.tool.more::after {
  content: "";
  position: absolute;
  right: 3px;
  bottom: 3px;
  border: 1.5px solid transparent;
  border-right-color: #b5b5b5;
  border-bottom-color: #b5b5b5;
}

.type {
  font-family: "Liberation Serif", serif;
  font-size: 19px;
  color: #c4c4c4;
}

.colors {
  position: relative;
  height: 47px;
  margin-top: 5px;
  flex: none;
}

.chip {
  position: absolute;
  width: 23px;
  height: 23px;
  border: 1px solid #cfcfcf;
}

.chip-fg { left: 13px; top: 0; background: #000; }
.chip-bg { left: 27px; top: 14px; background: #fff; }
.chip-swap { position: absolute; left: 41px; top: -2px; }
.chip-reset { position: absolute; left: 10px; top: 29px; }

.mask-row {
  display: flex;
  justify-content: space-between;
  padding: 5px 9px 0 8px;
}

/* document */
.document {
  width: 967px;
  display: flex;
  flex-direction: column;
  flex: none;
  background: #3c3c3c;
}

.tabs {
  height: 18px;
  padding-left: 2px;
  background: #3f3f3f;
  flex: none;
}

.doc-tab {
  width: 200px;
  height: 18px;
  padding-left: 8px;
  background: #515151;
  font-size: 10px;
  font-weight: 700;
  line-height: 18px;
  color: #c4c4c4;
  white-space: nowrap;
}

.tab-x {
  margin-left: 5px;
  font-weight: 400;
  font-size: 12px;
}

.doc-body {
  flex: 1;
  display: flex;
  min-height: 0;
}

.doc-view {
  width: 948px;
  display: grid;
  grid-template-columns: 15px 933px;
  grid-template-rows: 15px 584px;
  flex: none;
}

.ruler-corner { background: #535353; }

.ruler {
  display: flex;
  background-color: var(--ruler);
  font-size: 10px;
  color: #9c9c9c;
}

.ruler span {
  flex: none;
  border-color: #909090;
  border-style: solid;
  border-width: 0;
}

.ruler-h {
  background-image: repeating-linear-gradient(90deg, #777 0 1px, transparent 1px 8.4375px);
  background-size: 100% 3px;
  background-repeat: no-repeat;
  background-position: -1px 100%;
}

.ruler-h span {
  width: 67.5px;
  height: 15px;
  padding-left: 2px;
  line-height: 11px;
  border-left-width: 1px;
}

.ruler-h .start { width: 52px; border: 0; }

.ruler-v {
  flex-direction: column;
  align-items: stretch;
  overflow: hidden;
  background-image: repeating-linear-gradient(0deg, #777 0 1px, transparent 1px 8.4375px);
  background-size: 3px 100%;
  background-repeat: no-repeat;
  background-position: 100% 5px;
}

.ruler-v span {
  height: 67.5px;
  padding: 0 0 0 3px;
  line-height: 12px;
  border-top-width: 1px;
}

.ruler-v .start { height: 11px; border: 0; padding: 0; }

.pasteboard {
  background: var(--board);
  padding: 11px 0 0 185px;
  overflow: hidden;
  border-left: 1px solid #555;
}

.page {
  position: relative;
  width: 562px;
  height: 562px;
  background: #fff;
  box-shadow: 0 1px 0 #333, -1px 0 0 #444, 0 -1px 0 #555, 1px 0 0 #555;
}

.shape {
  position: absolute;
  left: 228px;
  top: 159px;
  width: 176px;
  height: 176px;
  border-radius: 50%;
  background: #000;
}

.readout {
  position: absolute;
  left: 320px;
  top: 195px;
  width: 67px;
  height: 32px;
  padding: 3px 0 0 7px;
  background: #0d0d0d;
  border: 1px solid #262626;
  border-radius: 3px;
  font-size: 8.5px;
  line-height: 12px;
  color: #ddd;
  white-space: nowrap;
}

.readout-row {
  display: flex;
  align-items: center;
  gap: 3px;
}

.readout-row span:last-child { margin-left: 4px; }

.click-mark {
  position: absolute;
  left: 255px;
  top: 289px;
  width: 34px;
  height: 34px;
  border-radius: 50%;
  background: radial-gradient(circle, #a8942a 0 5.5px, #c9432a 6px 11px, #a89c22 11.5px);
}

.cursor {
  position: absolute;
  left: 267px;
  top: 304px;
}

.doc-scroll {
  flex: 1;
  background: linear-gradient(90deg, #4c4c4c, #434343);
  border-left: 1px solid #3a3a3a;
  border-right: 1px solid #3a3a3a;
}

.statusbar {
  height: 15px;
  display: flex;
  flex: none;
  font-size: 9.5px;
  line-height: 15px;
}

.status-info {
  width: 258px;
  display: flex;
  align-items: center;
  padding-left: 12px;
  background: #535353;
  color: #c4c4c4;
  flex: none;
}

.zoom-val { width: 36px; }
.status-ico { margin-right: 6px; }
.doc-size { margin-left: 46px; width: 121px; flex: none; }

.play {
  width: 0;
  height: 0;
  border-left: 6px solid #ddd;
  border-top: 4px solid transparent;
  border-bottom: 4px solid transparent;
}

.status-track {
  width: 690px;
  background: #3f3f3f;
  flex: none;
}

.status-corner {
  flex: 1;
  background: #555;
}

/* collapsed panels */
.dock {
  width: 36px;
  display: flex;
  flex-direction: column;
  background: #525252;
  border-right: 3px solid #3a3a3a;
  flex: none;
}

.collapse-bar.right {
  justify-content: flex-end;
  padding-right: 2px;
}

.dock-item {
  height: 38px;
  display: flex;
  flex-direction: column;
  align-items: center;
  border-bottom: 1px solid #3c3c3c;
}

.dock-item .grip {
  width: 100%;
  height: 7px;
  padding: 2px 8px;
}

.dock-item svg { margin-top: 5px; }
.dock-item:last-child svg { margin-top: 3px; }

/* right panels */
.panels {
  position: relative;
  flex: 1;
  min-width: 0;
  display: flex;
  flex-direction: column;
  background: #3a3a3a;
  overflow: hidden;
}

.collapse-bar.end {
  justify-content: flex-end;
  padding-right: 4px;
}

.panel {
  background: #525252;
  flex: none;
  margin-bottom: 3px;
  width: 100%;
}

.panel-tabs {
  display: flex;
  align-items: stretch;
  height: 16px;
  background: #3e3e3e;
  font-size: 9px;
  line-height: 17px;
  font-weight: 600;
}

.ptab {
  padding: 0 7px;
  background: #444;
  color: #808080;
}

.ptab.on {
  background: #525252;
  color: #c8c8c8;
}

.panel-menu {
  width: 10px;
  height: 6px;
  margin: 5px 7px 0 auto;
  background: repeating-linear-gradient(#bbb 0 1px, transparent 1px 2px);
}

/* color panel */
.color-panel {
  height: 109px;
}

.color-body {
  display: flex;
  padding: 8px 0 0 5px;
}

.color-chips {
  position: relative;
  width: 27px;
  height: 27px;
  margin-top: 1px;
  flex: none;
}

.chip-f,
.chip-b {
  position: absolute;
  width: 17px;
  height: 17px;
  border: 1px solid #ccc;
}

.chip-f { left: 0; top: 0; background: #000; }
.chip-b { left: 9px; top: 9px; background: #fff; }

.sliders {
  display: flex;
  flex-direction: column;
  gap: 6.5px;
  margin-left: 9px;
}

.slider-row {
  display: flex;
  align-items: flex-start;
  height: 16px;
  font-size: 10px;
}

.slider-name {
  width: 14px;
  padding-top: 2px;
  font-weight: 600;
  line-height: 14px;
}

.track {
  position: relative;
  width: 93px;
  height: 5px;
  margin-top: 2px;
  outline: 1px solid #6a6a6a;
}

.track.red { background: linear-gradient(90deg, #000, #d81a1a); }
.track.green { background: linear-gradient(90deg, #000, #1ed81e); }
.track.blue { background: linear-gradient(90deg, #000, #1616c8); }

.thumb {
  position: absolute;
  left: -3px;
  top: 6px;
  width: 7px;
  height: 6px;
  background: #a8a8a8;
  clip-path: polygon(50% 0, 100% 50%, 100% 100%, 0 100%, 0 50%);
}

.num {
  width: 31px;
  height: 16px;
  margin-left: 5px;
  padding-left: 5px;
  background: #414141;
  font-size: 9.5px;
  line-height: 16px;
}

.spectrum-row {
  display: flex;
  margin: 8px 17px 0 4px;
  height: 14px;
}

.spectrum {
  flex: 1;
  background:
    linear-gradient(rgba(255, 255, 255, 0.7), rgba(255, 255, 255, 0) 45%, rgba(0, 0, 0, 0) 55%, #000),
    linear-gradient(90deg, #e8002a, #e8e800 15%, #19b23a 30%, #12b5d8 49%, #0c2bd0 65%, #c01aa0 84%, #e8002a);
}

.spectrum-ends {
  width: 7px;
  display: flex;
  flex-direction: column;
}

.spectrum-ends i { flex: 1; background: #fff; }
.spectrum-ends i + i { background: #000; }

/* adjustments */
.adjust-panel {
  height: 112px;
}

.adjust-title {
  padding: 4px 0 0 8px;
  height: 19px;
  font-size: 9.2px;
  font-weight: 700;
  color: #d8d8d8;
  line-height: 15px;
}

.adj-row {
  display: grid;
  grid-template-columns: repeat(5, 22.5px);
  justify-content: center;
  justify-items: center;
  align-items: center;
  height: 25.25px;
  width: 192px;
}

.adj-row.six { grid-template-columns: repeat(6, 22.5px); }

/* layers */
.layers-panel {
  flex: 1;
  display: flex;
  flex-direction: column;
  margin-bottom: 0;
  min-height: 0;
}

.layer-filter,
.layer-blend,
.layer-lock {
  display: flex;
  align-items: center;
  flex: none;
  font-size: 9.5px;
  padding-left: 5px;
}

.layer-filter { height: 27px; }
.layer-blend { height: 26px; }
.layer-lock { height: 29px; padding-bottom: 2px; border-bottom: 1px solid #3c3c3c; }

.kind {
  width: 63px;
  gap: 3px;
}

.filter-icons {
  display: flex;
  align-items: center;
  gap: 11px;
  margin-left: 12px;
  width: 108px;
}

.filter-t {
  font-family: "Liberation Serif", serif;
  font-size: 13px;
  line-height: 13px;
}

.filter-toggle {
  width: 7px;
  height: 15px;
  margin-left: 9px;
  background: linear-gradient(#777 50%, #2e2e2e 50%);
}

.normal { width: 102px; }

.field-label {
  color: #c4c4c4;
  white-space: nowrap;
}

.layer-blend .field-label { margin-left: 7px; width: 40px; }

.pct {
  width: 32px;
  height: 17px;
  padding-left: 5px;
  background: #363636;
  line-height: 17px;
  font-size: 9.5px;
  color: #c8c8c8;
}

.pct-arrow {
  position: relative;
  width: 17px;
  height: 17px;
  background: #606060;
}

.pct-arrow::after {
  content: "";
  position: absolute;
  left: 6px;
  top: 7px;
  border: 3px solid transparent;
  border-top: 3px solid #ccc;
  border-bottom: 0;
}

.layer-lock .field-label { width: 30px; padding-left: 1px; }

.lock-icons {
  display: flex;
  align-items: center;
  gap: 8px;
  width: 78px;
  padding-left: 1px;
}

.lock-checker {
  width: 12px;
  height: 12px;
  background: repeating-conic-gradient(#c4c4c4 0 25%, #666 0 50%) 0 0 / 6px 6px;
}

.layer-lock .field-label.fill { width: 34px; text-align: right; padding-right: 5px; margin-left: 7px; }

.layers-wrap {
  flex: 1;
  display: flex;
  min-height: 0;
}

.layer-list {
  width: 194px;
  flex: none;
}

.layers-scroll {
  flex: 1;
  background: #454545;
  border-left: 1px solid #3a3a3a;
}

.layer {
  position: relative;
  height: 36px;
  display: flex;
  align-items: center;
  padding-left: 7px;
  border-bottom: 1px solid #3f3f3f;
}

.layer.selected { background: #62738f; }

.eye { margin-right: 10px; }

.thumb-box {
  position: relative;
  width: 31px;
  height: 31px;
  flex: none;
  border: 1px solid #111;
}

.thumb-box.sel {
  width: 33px;
  height: 33px;
  outline: 1px solid #e0e0e0;
  background: repeating-conic-gradient(#c8c8c8 0 25%, #fff 0 50%) 0 0 / 10px 10px;
}

.thumb-box.white {
  background: #fff;
  margin-left: 1px;
  width: 29px;
  height: 30px;
}

.thumb-dot {
  position: absolute;
  left: 2px;
  top: 2px;
  width: 8px;
  height: 8px;
  border-radius: 50%;
  background: #000;
}

.layer-name {
  margin-left: 8px;
  font-size: 9.5px;
  color: #d4d4d4;
}

.layer-name.ital {
  margin-left: 11px;
  font-style: italic;
}

.layer-lock-ico { margin-left: auto; margin-right: 16px; }

.layer-actions {
  height: 18px;
  display: flex;
  align-items: center;
  justify-content: space-between;
  padding: 0 27px 0 18px;
  background: #5a5a5a;
  border-top: 1px solid #6a6a6a;
  flex: none;
}

.fx {
  font-family: "Liberation Serif", serif;
  font-style: italic;
  font-size: 13px;
  line-height: 13px;
  color: #c4c4c4;
}

.edge-marks {
  position: absolute;
  top: 0;
  right: 0;
}

/* taskbar */
.taskbar {
  height: 29px;
  display: flex;
  align-items: stretch;
  justify-content: space-between;
  background: var(--task);
  flex: none;
}

.task-left {
  display: flex;
  margin-left: -1px;
}

.task-item {
  width: 34px;
  display: flex;
  align-items: center;
  justify-content: center;
}

.task-item.open {
  position: relative;
  margin-left: 2px;
}

.task-item.current { margin-left: 1px; background: #26468c; }

.task-item.open::after {
  content: "";
  position: absolute;
  left: 2px;
  right: 2px;
  bottom: 0;
  height: 2px;
  background: #a8bce8;
}

.skype {
  width: 16px;
  height: 16px;
  border-radius: 50%;
  background: #1ea6e0;
  color: #fff;
  font-size: 12px;
  font-weight: 700;
  line-height: 16px;
  text-align: center;
}

.ps-task {
  width: 16px;
  height: 16px;
  border: 1px solid #6fb2e0;
  background: #0c2a4a;
  color: #8ec8ee;
  font-size: 9px;
  font-weight: 700;
  line-height: 14px;
  text-align: center;
}

.task-right {
  display: flex;
  align-items: center;
  padding-right: 24px;
}

.clock {
  width: 41px;
  margin-left: 13px;
  font-size: 10.5px;
  color: #dfe3ee;
  white-space: nowrap;
}

.notify { margin-left: 18px; }
```
